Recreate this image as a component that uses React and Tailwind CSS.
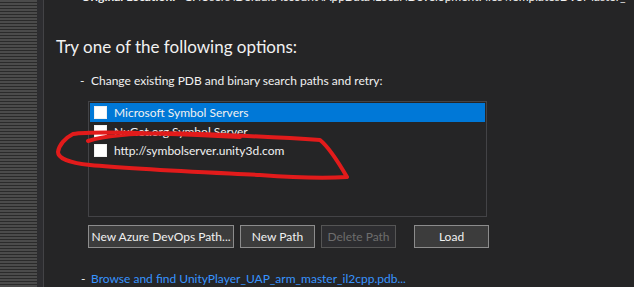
import React from 'react';

const symbolPaths = [
  { label: 'Microsoft Symbol Servers', selected: true },
  { label: 'NuGet.org Symbol Server', selected: false },
  { label: 'http://symbolserver.unity3d.com', selected: false },
];

const buttons = [
  { label: 'New Azure DevOps Path...', width: 'w-[146px]', disabled: false },
  { label: 'New Path', width: 'w-[75px]', disabled: false },
  { label: 'Delete Path', width: 'w-[75px]', disabled: true },
];

const App = () => {
  return (
    <div
      className="relative w-[634px] h-[287px] overflow-hidden flex bg-[#252526] text-[#f1f1f1]"
      style={{ fontFamily: '"Segoe UI", Lato, "Noto Sans", sans-serif' }}
    >
      {/* Left splitter strip */}
      <div className="shrink-0 w-[37px] h-full bg-[repeating-linear-gradient(to_bottom,#4b4b4b_0px,#4b4b4b_2px,#2a2a2a_2px,#2a2a2a_3px)]" />
      <div className="shrink-0 w-[6px] h-full bg-[#2d2d30]" />
      <div className="shrink-0 w-px h-full bg-[#434346]" />

      {/* Content */}
      <div className="flex-1 min-w-0 flex flex-col pl-[12px]">
        <div className="-mt-[11px] h-[16px] pl-[25px] text-[12px] leading-[16px] whitespace-nowrap">
          <span className="font-bold">Original Location:</span>
          <span className="ml-[9px]">C:\Users\DefaultAccount\AppData\Local\DevelopmentFiles\TemplatesDVSMaster_</span>
        </div>

        <div className="mt-[30px] text-[17px] leading-[24px] whitespace-nowrap">
          Try one of the following options:
        </div>

        <div className="mt-[14px] flex text-[12px] leading-[16px] pl-[24px]">
          <span className="w-[11px]">-</span>
          <span>Change existing PDB and binary search paths and retry:</span>
        </div>

        {/* Symbol path list */}
        <div className="mt-[12px] ml-[32px] w-[399px] h-[120px] border border-[#434346] p-px">
          {symbolPaths.map((item) => (
            <div
              key={item.label}
              className={`h-[19px] flex items-center pl-[4px] text-[12px] ${
                item.selected ? 'bg-[#0078d7]' : ''
              }`}
            >
              <span className="w-[13px] h-[13px] bg-white border border-[#f1f1f1] shrink-0" />
              <span className="ml-[7px] whitespace-nowrap">{item.label}</span>
            </div>
          ))}
        </div>

        <div className="mt-[8px] ml-[32px] flex text-[12px]">
          {buttons.map((b) => (
            <button
              key={b.label}
              className={`${b.width} h-[23px] mr-[6px] border whitespace-nowrap ${
                b.disabled
                  ? 'border-[#555555] bg-[#2d2d30] text-[#6d6d6d]'
                  : 'border-[#8c8c8c] bg-[#3c3c3c] text-[#f1f1f1]'
              }`}
            >
              {b.label}
            </button>
          ))}
          <button className="ml-[12px] w-[75px] h-[23px] border border-[#8c8c8c] bg-[#3c3c3c] text-[#f1f1f1]">
            Load
          </button>
        </div>

        <div className="mt-[23px] flex text-[12px] leading-[16px] pl-[25px] whitespace-nowrap">
          <span className="w-[10px]">-</span>
          <span className="text-[#3794ff]">Browse and find UnityPlayer_UAP_arm_master_il2cpp.pdb...</span>
        </div>
      </div>

      {/* Red marker scribble */}
      <svg
        className="absolute left-0 top-0 pointer-events-none"
        width="634"
        height="287"
        viewBox="0 0 634 287"
      >
        <path
          d="M 88 141 C 110 134, 150 132, 200 134 C 250 136, 290 138, 320 140 C 330 148, 340 165, 347 177 C 330 178, 300 178, 260 175 C 200 172, 130 169, 90 165 C 70 163, 58 158, 58 152 C 59 145, 65 138, 73 134 C 90 131, 140 132, 240 137"
          fill="none"
          stroke="#e21b1b"
          strokeWidth="4"
          strokeLinecap="round"
          strokeLinejoin="round"
        />
      </svg>
    </div>
  );
};

export default App;
